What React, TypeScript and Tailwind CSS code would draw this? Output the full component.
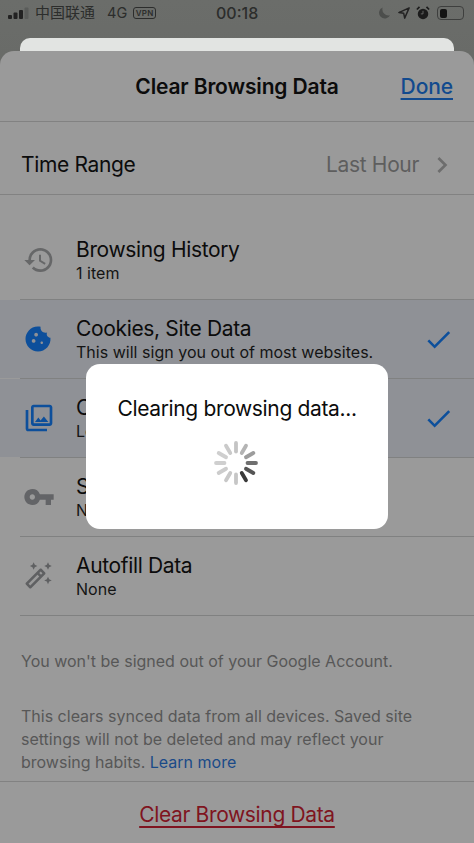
import { MdHistory, MdCookie, MdOutlinePhotoLibrary, MdVpnKey, MdOutlineAutoFixHigh, MdCheck, MdChevronRight } from "react-icons/md";
import type { ReactNode } from "react";

const font = { fontFamily: "Inter, 'Noto Sans CJK SC', sans-serif" };

function Spinner() {
  const bars: [number, string][] = [
    [0, "#c4c4c4"], [30, "#b4b4b4"], [60, "#9c9c9c"], [90, "#6f6f6f"], [120, "#555555"], [150, "#3a3a3a"],
    [180, "#c6c6c6"], [210, "#c8c8c8"], [240, "#cccccc"], [270, "#cfcfcf"], [300, "#cfcfcf"], [330, "#cacaca"],
  ];
  return (
    <svg width="46" height="46" viewBox="0 0 46 46">
      {bars.map(([a, c]) => (
        <line key={a} x1="23" y1="3" x2="23" y2="11.5" stroke={c} strokeWidth="3.8" strokeLinecap="round" transform={`rotate(${a} 23 23)`} />
      ))}
    </svg>
  );
}

function Row({ icon, title, sub, active }: { icon: ReactNode; title: string; sub: string; active?: boolean }) {
  return (
    <div className={`flex h-[78px] items-center pl-[23px] ${active ? "bg-[#8f9196]" : ""}`}>
      <div className="flex w-[53px] shrink-0 items-center">{icon}</div>
      <div className="flex-1 pb-px">
        <div className="text-[21px] leading-[26px] tracking-[-0.35px] text-[#0c0c0c]">{title}</div>
        <div className="text-[16px] leading-[20px] tracking-[0.02px] text-[#141414]">{sub}</div>
      </div>
      {active && <MdCheck className="mr-[20px] text-[#0d4f9b]" size={31} />}
    </div>
  );
}

function Divider() {
  return <div className="ml-5 h-px bg-[#808181]" />;
}

export default function App() {
  return (
    <div style={font} className="relative flex h-[843px] w-[474px] flex-col overflow-hidden bg-linear-to-b from-[#6b6d6a] to-[#4e4f4d]">
      <div className="flex h-[38px] items-center pl-2 pr-[10px] pb-[12px] text-[#2c2d2c]">
        <div className="flex w-[208px] items-center">
          <svg width="21" height="13" viewBox="0 0 21 13" className="mr-[6px]">
            <rect x="0" y="8" width="4" height="4" rx="1" fill="#222" />
            <rect x="5.5" y="5.5" width="4" height="6.5" rx="1" fill="#222" />
            <rect x="11" y="3" width="4" height="9" rx="1" fill="#222" />
            <rect x="16.5" y="0.5" width="4" height="11.5" rx="1" fill="#5a5c5a" />
          </svg>
          <span className="text-[15px]">中国联通</span>
          <span className="ml-[12px] text-[14.5px]">4G</span>
          <span className="ml-[6px] rounded-[3px] border-[1.5px] border-[#2c2d2c] px-[1.5px] text-[8px] font-semibold leading-[10px] tracking-[0.3px]">VPN</span>
        </div>
        <span className="text-[16px] font-medium">00:18</span>
        <div className="ml-auto flex items-center">
          <svg width="13" height="14" viewBox="0 0 14 14" className="mr-[7px]"><path d="M5 1a6.2 6.2 0 1 0 8 8.3A6.6 6.6 0 0 1 5 1z" fill="#4c4e4c" /></svg>
          <svg width="12" height="12" viewBox="0 0 14 14" className="mr-[6px]"><path d="M13 1 1 6.5l5.6.7L7.8 13z" fill="none" stroke="#222" strokeWidth="1.7" strokeLinejoin="round" /></svg>
          <svg width="14" height="14" viewBox="0 0 16 16" className="mr-[7px]">
            <circle cx="8" cy="9" r="6" fill="#1c1c1c" />
            <path d="M8 5.5V9H5.5" stroke="#6a6c6a" strokeWidth="1" fill="none" />
            <path d="M1 4l3-3M15 4l-3-3" stroke="#1c1c1c" strokeWidth="2" />
          </svg>
          <div className="flex h-[14px] w-[27px] items-center rounded-[4px] border border-[#3e3f3e] p-[1.5px]">
            <div className="h-full w-[7px] rounded-[2px] bg-[#141414]" />
          </div>
        </div>
      </div>
      <div className="mx-5 h-[13px] rounded-t-[10px] bg-[#e2e4e2]" />
      <div className="flex flex-1 flex-col rounded-t-[14px] bg-[#9a9a9a]">
        <div className="relative flex h-[71px] items-center justify-center border-b border-[#828282] pt-px">
          <span className="text-[21px] font-semibold tracking-[-0.15px] text-[#0c0c0c]">Clear Browsing Data</span>
          <span className="absolute right-[21px] text-[21px] font-medium tracking-[-0.1px] text-[#124a8e] underline underline-offset-[4px]">Done</span>
        </div>
        <div className="flex h-[73px] items-center justify-between border-b border-[#828282] pl-[21px] pr-[16px] pt-[14px]">
          <span className="text-[21px] tracking-[-0.35px] text-[#0c0c0c]">Time Range</span>
          <span className="flex items-center text-[21px] tracking-[-0.35px] text-[#5e5e5e]">Last Hour<MdChevronRight size={32} className="ml-[7px] text-[#6d6d6d]" /></span>
        </div>
        <div className="h-[26px]" />
        <Row icon={<MdHistory size={32} className="text-[#666768]" />} title="Browsing History" sub="1 item" />
        <Divider />
        <Row active icon={<MdCookie size={30} className="text-[#0d4f9b]" />} title="Cookies, Site Data" sub="This will sign you out of most websites." />
        <Divider />
        <Row active icon={<MdOutlinePhotoLibrary size={32} className="text-[#0d4f9b]" />} title="Cached Images and Files" sub="Less than 1 MB" />
        <Divider />
        <Row icon={<MdVpnKey size={32} className="text-[#636467]" />} title="Saved Passwords" sub="None" />
        <Divider />
        <Row icon={<MdOutlineAutoFixHigh size={30} className="text-[#5f6062]" />} title="Autofill Data" sub="None" />
        <Divider />
        <div className="px-[21px] pt-[34px] text-[16px] leading-[23px] text-[#575757]">
          <p>You won't be signed out of your Google Account.</p>
          <p className="mt-[32px]">
            This clears synced data from all devices. Saved site settings will not be deleted and may reflect your browsing habits. <span className="text-[#1a4a88]">Learn more</span>
          </p>
        </div>
        <div className="mt-[7px] flex flex-1 items-center justify-center border-t border-[#828282] pt-[5px]">
          <span className="text-[21px] tracking-[-0.35px] text-[#7f1420] underline underline-offset-[4px]">Clear Browsing Data</span>
        </div>
      </div>
      <div className="absolute left-[86px] top-[364px] flex h-[165px] w-[302px] flex-col items-center rounded-[14px] bg-white pt-[31px]">
        <span className="text-[21px] leading-[27px] tracking-[-0.35px] text-[#0c0c0c]">Clearing browsing data...</span>
        <div className="mt-[18px] -ml-[3px]"><Spinner /></div>
      </div>
    </div>
  );
}
